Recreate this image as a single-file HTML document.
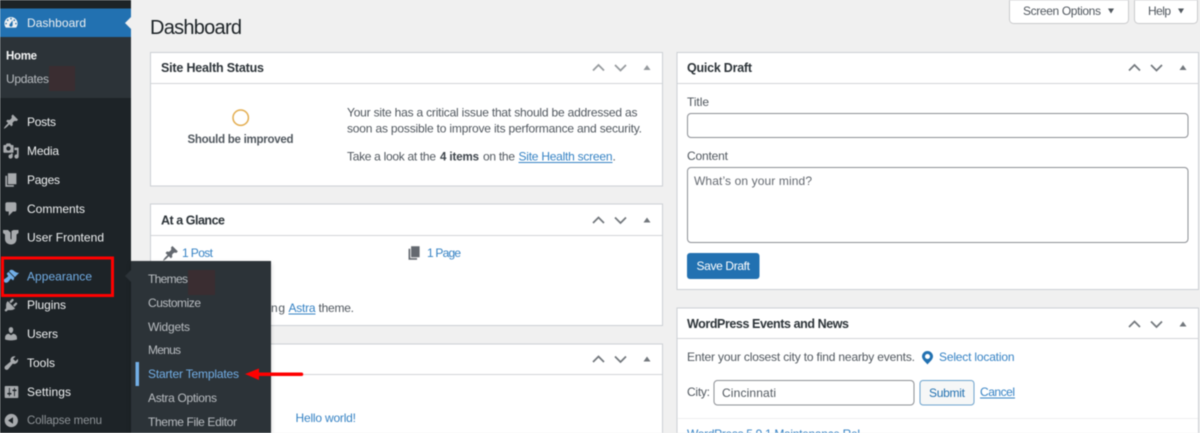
<!DOCTYPE html>
<html lang="en">
<head>
<meta charset="utf-8">
<title>Dashboard</title>
<style>
html,body{margin:0;padding:0;width:1200px;height:433px;overflow:hidden;background:#f0f0f0}
svg{display:block;filter:blur(.5px)}
text{font-family:"Liberation Sans",sans-serif;font-size:12px;fill:#3c434a;white-space:pre}
.m{fill:#eef0f1}
.s{fill:#b9bdc1}
.b{fill:#3582c4}
.t{font-weight:bold;fill:#2c3338;font-size:12.5px}
.g{fill:#50575e}
.i{fill:#a7aaad}
.l{stroke:#3582c4;stroke-width:1}
</style>
</head>
<body>
<svg width="1200" height="433" viewBox="0 0 1200 433" xmlns="http://www.w3.org/2000/svg">
<defs>
<g id="ctl">
<path d="M0 3 5.5-2.5 11 3" fill="none" stroke="#72777c" stroke-width="1.7"/>
<path d="M22-2.5 27.500 3 33-2.500" fill="none" stroke="#72777c" stroke-width="1.7"/>
<path d="M50.500 2.500 54-2.500 57.500 2.500z" fill="#72777c"/>
</g>
<path id="pin" d="M10.44 3.020l1.820-1.820 6.360 6.350-1.830 1.820c-1.050-.68-2.480-.57-3.410.36l-.75.75c-.92.93-1.040 2.350-.35 3.410l-1.830 1.820-2.410-2.410-2.800 2.790c-.42.42-3.380 2.710-3.800 2.290s1.860-3.390 2.280-3.810l2.790-2.790L4.100 9.360l1.830-1.820c1.050.69 2.480.57 3.400-.36l.75-.75c.93-.92 1.050-2.350.36-3.410z"/>
<path id="pg" d="M6 15V2h10v13H6zm-1 1h8v2H3V5h2v11z"/>
</defs>

<rect width="1200" height="433" fill="#f0f0f0"/>

<!-- Sidebar -->
<rect width="131" height="433" fill="#1d2327"/>
<rect y="8.500" width="131" height="28.500" fill="#2271b1"/>
<rect y="37" width="131" height="61" fill="#2c3338"/>
<path d="M131 17 125 23 131 29z" fill="#f0f0f0"/>
<rect x="49" y="66" width="26" height="25" fill="#3a2d31"/>

<g class="i">
<path transform="translate(2.800 14.500) scale(.82)" fill="#eef0f1" fill-rule="evenodd" d="M3.760 16h12.480c1.100-1.370 1.760-3.110 1.760-5 0-4.420-3.580-8-8-8s-8 3.580-8 8c0 1.890.66 3.630 1.760 5zM10 4c.55 0 1 .45 1 1s-.45 1-1 1-1-.45-1-1 .45-1 1-1zM6 6c.55 0 1 .45 1 1s-.45 1-1 1-1-.45-1-1 .45-1 1-1zm8 0c.55 0 1 .45 1 1s-.45 1-1 1-1-.45-1-1 .45-1 1-1zm-5.370 5.550L12 7v6c0 1.100-.9 2-2 2s-2-.9-2-2c0-.57.24-1.080.63-1.450zM4 10c.55 0 1 .45 1 1s-.45 1-1 1-1-.45-1-1 .45-1 1-1zm12 0c.55 0 1 .45 1 1s-.45 1-1 1-1-.45-1-1 .45-1 1-1z"/>
<use href="#pin" transform="translate(2.800 113.500) scale(.82)"/>
<path transform="translate(2.500 142.500) scale(.85)" d="M13 11V4c0-.55-.45-1-1-1h-1.670L9 1H5L3.670 3H2c-.55 0-1 .45-1 1v7c0 .55.45 1 1 1h10c.55 0 1-.45 1-1zM7 4.500c1.380 0 2.500 1.120 2.500 2.500S8.380 9.500 7 9.500 4.500 8.380 4.500 7 5.620 4.500 7 4.500zM14 6h5v10.500c0 1.380-1.120 2.500-2.500 2.500S14 17.880 14 16.500s1.120-2.500 2.500-2.500c.17 0 .34.02.5.05V9h-3V6zm-4 8.050V13h2v3.500c0 1.380-1.120 2.500-2.500 2.500S7 17.880 7 16.500 8.120 14 9.500 14c.17 0 .34.02.5.05z" fill-rule="evenodd"/>
<use href="#pg" transform="translate(2.800 171.500) scale(.85)"/>
<path transform="translate(2.800 200.500) scale(.85)" d="M5 2h9c1.100 0 2 .9 2 2v7c0 1.100-.9 2-2 2h-2l-5 5v-5H5c-1.100 0-2-.9-2-2V4c0-1.100.9-2 2-2z"/>
<path d="M3 230h5l2.500 2.500v5.500c0 1 .5 1.500 1 1.500V231l2-1h5v3l-2 1.500v4.500c0 3.500-2.500 5.500-5.500 5.500s-6-2-6-5.500v-4.500L3 233z"/>
<path transform="translate(3 268) scale(.82)" fill="#72aee6" d="M14.480 11.060L7.410 3.990l1.500-1.500c.5-.56 2.300-.47 3.510.32 1.210.8 1.430 1.280 2.910 2.100 1.180.64 2.450 1.260 4.450.85zm-.71.71L6.700 4.700 4.930 6.470c-.39.39-.39 1.020 0 1.410l1.060 1.060c.39.39.39 1.030 0 1.420-.6.6-1.430 1.110-2.210 1.690-.35.26-.7.53-1.010.84C1.430 13.230 1 14.220 1 15.220c0 1.560 1.220 2.780 2.780 2.780 1 0 1.990-.43 2.730-1.170.31-.31.58-.66.84-1.010.58-.78 1.090-1.610 1.690-2.210.39-.39 1.030-.39 1.420 0l1.060 1.060c.39.39 1.020.39 1.410 0z"/>
<path transform="translate(2.800 297) scale(.82)" d="M13.110 4.360L9.870 7.600 8 5.730l3.240-3.240c.35-.34 1.050-.2 1.560.32.52.51.66 1.210.31 1.550zm-8 1.770l.91-1.120 9.010 9.010-1.190.84c-.71.71-2.630 1.160-3.820 1.160H6.140L4.900 17.260c-.59.59-1.540.59-2.120 0-.59-.58-.59-1.530 0-2.120l1.240-1.240v-3.880c0-1.130.4-3.190 1.090-3.890zm7.260 3.970l3.240-3.240c.34-.35 1.040-.21 1.550.31.52.51.66 1.210.31 1.550l-3.240 3.250z"/>
<path transform="translate(2.800 325.500) scale(.82)" d="M10 9.250c-2.270 0-2.730-3.440-2.730-3.440C7 4.020 7.820 2 9.970 2c2.160 0 2.980 2.020 2.710 3.810 0 0-.41 3.440-2.680 3.440zm0 2.570L12.720 10c2.390 0 4.520 2.330 4.520 4.530v2.490s-3.650 1.130-7.240 1.130c-3.650 0-7.240-1.130-7.240-1.130v-2.490c0-2.250 1.940-4.480 4.470-4.480z"/>
<path transform="translate(2.800 354.500) scale(.85)" fill-rule="evenodd" d="M16.680 9.770c-1.340 1.340-3.300 1.670-4.950.99l-5.410 6.520c-.99.99-2.590.99-3.580 0s-.99-2.590 0-3.570l6.520-5.420c-.68-1.650-.35-3.610.99-4.950 1.280-1.280 3.120-1.620 4.720-1.060l-2.890 2.890 2.820 2.820 2.860-2.870c.53 1.580.18 3.390-1.080 4.650z"/>
<path transform="translate(3 383.500) scale(.85)" fill-rule="evenodd" d="M18 16V4c0-.55-.45-1-1-1H3c-.55 0-1 .45-1 1v12c0 .55.45 1 1 1h14c.55 0 1-.45 1-1zM8 11h1c.55 0 1 .45 1 1s-.45 1-1 1H8v1.500c0 .28-.22.5-.5.5s-.5-.22-.5-.5V13H6c-.55 0-1-.45-1-1s.45-1 1-1h1V5.500c0-.28.22-.5.5-.5s.5.22.5.5V11zm5-2h-1c-.55 0-1-.45-1-1s.45-1 1-1h1V5.500c0-.28.22-.5.5-.5s.5.22.5.5V7h1c.55 0 1 .45 1 1s-.45 1-1 1h-1v5.500c0 .28-.22.5-.5.5s-.5-.22-.5-.5V9z"/>
<path transform="translate(2.800 412) scale(.85)" fill-rule="evenodd" d="M10 2.160c4.330 0 7.840 3.510 7.840 7.840s-3.510 7.840-7.840 7.840S2.160 14.330 2.160 10 5.710 2.160 10 2.160zm2 11.720V6.120L6.180 9.970z"/>
</g>

<text class="m" x="27" y="27" textLength="59">Dashboard</text>
<text x="6" y="59.500" textLength="31" style="font-weight:bold;fill:#f5f6f6;font-size:11.500px">Home</text>
<text class="s" x="6" y="83" textLength="43">Updates</text>
<text class="m" x="27" y="126" textLength="29">Posts</text>
<text class="m" x="27" y="155" textLength="32">Media</text>
<text class="m" x="27" y="184" textLength="33">Pages</text>
<text class="m" x="27" y="213" textLength="58">Comments</text>
<text class="m" x="27" y="241.500" textLength="77">User Frontend</text>
<text x="27" y="280.500" textLength="65" style="fill:#72aee6">Appearance</text>
<text class="m" x="27" y="309" textLength="39">Plugins</text>
<text class="m" x="27" y="338" textLength="31">Users</text>
<text class="m" x="27" y="367" textLength="28">Tools</text>
<text class="m" x="27" y="396" textLength="44">Settings</text>
<text x="27" y="424" textLength="75" style="fill:#8f9498;font-size:11.500px">Collapse menu</text>

<!-- Heading + tabs -->
<text x="150" y="34" textLength="92" style="font-size:20px;fill:#1d2327">Dashboard</text>
<path d="M1009.500 0v19.500a4 4 0 0 0 4 4h111a4 4 0 0 0 4-4V0z" fill="#fff" stroke="#c9cacc"/>
<path d="M1134.500 0v19.500a4 4 0 0 0 4 4h55a4 4 0 0 0 4-4V0z" fill="#fff" stroke="#c9cacc"/>
<text class="g" x="1023" y="15" textLength="78">Screen Options</text>
<text class="g" x="1148" y="15" textLength="23">Help</text>
<path d="M1108 8.500h6l-3 5zM1178 8.500h6l-3 5z" fill="#50575e"/>

<!-- Site Health -->
<rect x="150.500" y="52.500" width="512" height="133.500" fill="#fff" stroke="#ccd0d4"/>
<path d="M151 83.500h511" stroke="#d3d5d8"/>
<text class="t" x="161" y="72" textLength="103">Site Health Status</text>
<use href="#ctl" transform="translate(593 67.500)" opacity=".75"/>
<circle cx="240.700" cy="117.700" r="7.700" fill="none" stroke="#e3ad4f" stroke-width="1.500"/>
<text x="187.500" y="143" textLength="106" style="font-weight:bold;fill:#50575e;font-size:11.500px">Should be improved</text>
<text class="g" x="347" y="116.500" textLength="290.500">Your site has a critical issue that should be addressed as</text>
<text class="g" x="347" y="132.500" textLength="295">soon as possible to improve its performance and security.</text>
<text class="g" x="347" y="160.500" textLength="89">Take a look at the</text>
<text x="440" y="160.500" textLength="39" style="font-weight:bold;font-size:11.500px;fill:#3c434a">4 items</text>
<text class="g" x="483" y="160.500" textLength="32">on the</text>
<text class="b" x="518.500" y="160.500" textLength="94">Site Health screen</text>
<path class="l" d="M518.500 162.500h94"/>
<text class="g" x="612.500" y="160.500">.</text>

<!-- At a Glance -->
<rect x="150.500" y="204" width="512" height="121.500" fill="#fff" stroke="#ccd0d4"/>
<path d="M151 235.500h511" stroke="#d3d5d8"/>
<text class="t" x="161" y="224.500" textLength="64">At a Glance</text>
<use href="#ctl" transform="translate(593 220)"/>
<use href="#pin" fill="#646970" transform="translate(162 245) scale(.85)"/>
<use href="#pg" fill="#646970" transform="translate(406 244.500) scale(.85)"/>
<text class="b" x="182" y="257" textLength="31">1 Post</text>
<text class="b" x="427" y="257" textLength="34">1 Page</text>
<text class="g" x="271" y="312" textLength="14">ng</text>
<text class="b" x="288.500" y="312" textLength="27">Astra</text>
<path class="l" d="M288.500 314h27"/>
<text class="g" x="318.500" y="312" textLength="35.500">theme.</text>

<!-- Activity -->
<rect x="150.500" y="344" width="512" height="100" fill="#fff" stroke="#ccd0d4"/>
<path d="M151 374.500h511" stroke="#d3d5d8"/>
<use href="#ctl" transform="translate(593 359)"/>
<text class="b" x="295.500" y="422" textLength="60.500">Hello world!</text>

<!-- Flyout -->
<rect x="131" y="261" width="140" height="172" fill="#2c3338" style="filter:drop-shadow(0 2px 2px rgba(0,0,0,.2))"/>
<path d="M131 270 125 276 131 282z" fill="#2c3338"/>
<rect x="188" y="270" width="27" height="25" fill="#3a2d31"/>
<rect x="135.500" y="362" width="3.500" height="24" fill="#72aee6"/>
<text class="s" x="148" y="283" textLength="40">Themes</text>
<text class="s" x="148" y="307" textLength="53">Customize</text>
<text class="s" x="148" y="331" textLength="42">Widgets</text>
<text class="s" x="148" y="354" textLength="33">Menus</text>
<text x="148" y="378" textLength="91" style="fill:#72aee6">Starter Templates</text>
<text class="s" x="148" y="402" textLength="69">Astra Options</text>
<text class="s" x="148" y="426" textLength="89">Theme File Editor</text>

<!-- Quick Draft -->
<rect x="677" y="52.500" width="521.500" height="237" fill="#fff" stroke="#ccd0d4"/>
<path d="M677.500 83.500h521" stroke="#d3d5d8"/>
<text class="t" x="687" y="72" textLength="65">Quick Draft</text>
<use href="#ctl" transform="translate(1129 67.500)"/>
<text class="g" x="687" y="106" textLength="22">Title</text>
<rect x="687.500" y="113.500" width="500.500" height="24" rx="3.500" fill="#fff" stroke="#8c8f94"/>
<text class="g" x="687" y="160" textLength="41">Content</text>
<rect x="687.500" y="167.500" width="500.500" height="75" rx="3.500" fill="#fff" stroke="#8c8f94"/>
<text x="694" y="185" textLength="118" style="fill:#646970">What’s on your mind?</text>
<rect x="687" y="253" width="72.500" height="26" rx="3" fill="#2271b1"/>
<text x="696.500" y="270" textLength="53.500" style="fill:#fff">Save Draft</text>

<!-- Events -->
<rect x="677" y="308" width="521.500" height="140" fill="#fff" stroke="#ccd0d4"/>
<path d="M677.500 338.500h521" stroke="#d3d5d8"/>
<text class="t" x="687" y="328" textLength="162">WordPress Events and News</text>
<use href="#ctl" transform="translate(1129 324)"/>
<text class="g" x="687" y="361" textLength="228">Enter your closest city to find nearby events.</text>
<path d="M927.500 351a5.500 5.500 0 0 0-5.500 5.500c0 3 3.500 5.500 5.500 8 2-2.500 5.500-5 5.500-8a5.500 5.500 0 0 0-5.500-5.500zm0 3a2.500 2.500 0 1 1 0 5 2.500 2.500 0 0 1 0-5z" fill="#2271b1" fill-rule="evenodd"/>
<text class="b" x="939" y="361" textLength="75.500">Select location</text>
<text class="g" x="687" y="396" textLength="23">City:</text>
<rect x="714" y="380.500" width="200" height="24.500" rx="3.500" fill="#fff" stroke="#8c8f94"/>
<text class="g" x="722" y="397" textLength="54">Cincinnati</text>
<rect x="920" y="380.500" width="54" height="24.500" rx="3" fill="#f6f7f7" stroke="#6ea3cd"/>
<text x="929" y="397" textLength="36" style="fill:#2271b1">Submit</text>
<text class="b" x="980" y="396" textLength="35">Cancel</text>
<path class="l" d="M980 398h35"/>
<path d="M678 418.500h520" stroke="#eeeeef"/>
<text class="b" x="687" y="438" textLength="173">WordPress 5.9.1 Maintenance Rel</text>

<!-- Annotations -->
<rect x="2.500" y="258" width="110" height="37.500" fill="none" stroke="#f00" stroke-width="3"/>
<path d="M245 374 259 368.500v4h42.500a1.750 1.750 0 0 1 0 3.500H259v4z" fill="#f00"/>
</svg>
</body>
</html>
